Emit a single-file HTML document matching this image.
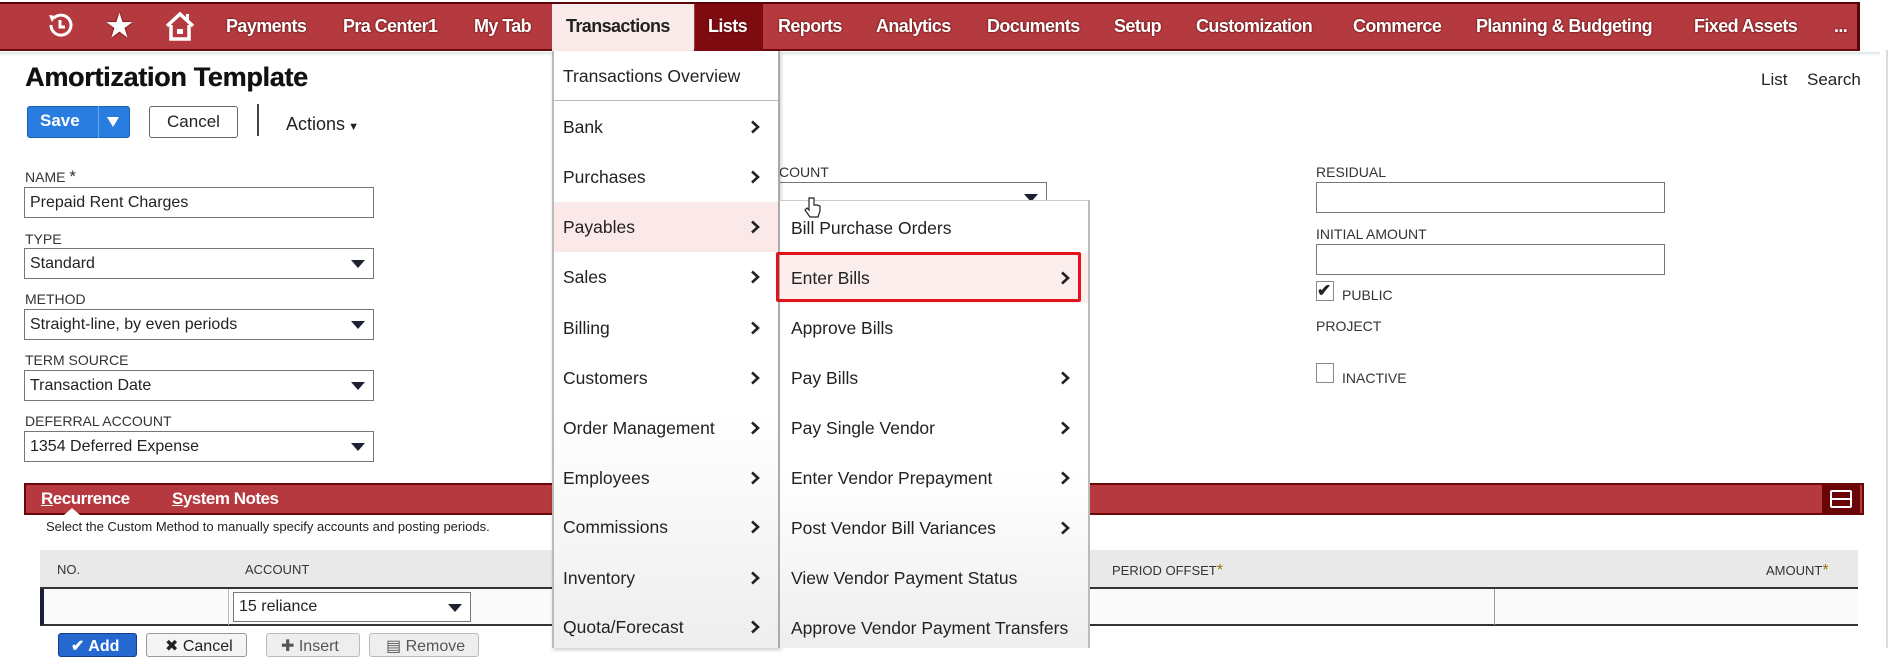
<!DOCTYPE html>
<html><head><meta charset="utf-8">
<style>
*{box-sizing:border-box;margin:0;padding:0}
body{width:1903px;height:648px;overflow:hidden;background:#fff;font-family:"Liberation Sans",sans-serif;color:#222;position:relative}
.a{position:absolute}
.nav{left:0;top:2px;width:1860px;height:49px;background:#b53a3f;border-top:2px solid #5a0508;border-bottom:2px solid #6a0a0d;border-right:3px solid #5a0508}
.ni{position:absolute;top:0;height:45px;line-height:45px;color:#fff;font-weight:bold;font-size:18px;letter-spacing:-0.6px;text-shadow:0 0 2px #400}
.lbl{font-size:14px;color:#333;position:absolute}
.box{position:absolute;border:1px solid #777;background:#fff;height:31px;font-size:16px;line-height:29px;padding-left:5px;color:#222}
.arr{position:absolute;right:8px;top:11px;width:0;height:0;border-left:7px solid transparent;border-right:7px solid transparent;border-top:8px solid #1d2233}
.mi{position:absolute;left:0;width:100%;height:50px;line-height:50px;font-size:17.5px;color:#222}
.ch{position:absolute;top:18px;width:10px;height:14px}
</style></head><body>
<svg width="0" height="0" style="position:absolute"><defs><symbol id="c" viewBox="0 0 10 14"><path d="M2 1.5 L8 7 L2 12.5" fill="none" stroke="#222" stroke-width="2.6"/></symbol></defs></svg>
<div class="a nav">
 <svg class="a" style="left:46px;top:8px" width="28" height="28" viewBox="0 0 28 28"><path d="M8 6 A10 10 0 1 1 5 13" fill="none" stroke="#fff" stroke-width="3"/><path d="M3 3 L10 4 L6 10Z" fill="#fff"/><path d="M14 8 V15 H19" fill="none" stroke="#fff" stroke-width="3"/></svg>
 <div class="ni" style="left:106px;font-size:30px">★</div>
 <svg class="a" style="left:164px;top:7px" width="32" height="30" viewBox="0 0 32 30"><path d="M3 15 L16 3 L29 15" fill="none" stroke="#fff" stroke-width="3.5"/><path d="M7 14 V28 H25 V14" fill="none" stroke="#fff" stroke-width="3.5"/><rect x="13" y="18" width="6" height="5" fill="#fff"/><rect x="22" y="3" width="3" height="7" fill="#fff"/></svg>
 <div class="ni" style="left:226px">Payments</div>
 <div class="ni" style="left:343px">Pra Center1</div>
 <div class="ni" style="left:474px">My Tab</div>
 <div class="a" style="left:552px;top:0;width:142px;height:47px;background:#fbeaea"></div>
 <div class="ni" style="left:566px;color:#222;text-shadow:none">Transactions</div>
 <div class="a" style="left:695px;top:0;width:68px;height:47px;background:#7e0b10"></div>
 <div class="ni" style="left:708px">Lists</div>
 <div class="ni" style="left:778px">Reports</div>
 <div class="ni" style="left:876px">Analytics</div>
 <div class="ni" style="left:987px">Documents</div>
 <div class="ni" style="left:1114px">Setup</div>
 <div class="ni" style="left:1196px">Customization</div>
 <div class="ni" style="left:1353px">Commerce</div>
 <div class="ni" style="left:1476px">Planning &amp; Budgeting</div>
 <div class="ni" style="left:1694px">Fixed Assets</div>
 <div class="ni" style="left:1834px">...</div>
</div>
<div class="a" style="left:1886px;top:50px;width:2px;height:598px;background:#ddd"></div>
<div class="a" style="left:0;top:52px;width:1880px;height:4px;background:linear-gradient(#d8e6e6,#fff)"></div>

<div class="a" style="left:25px;top:62px;font-size:27px;font-weight:bold;color:#111;letter-spacing:-0.3px;text-shadow:0.4px 0 0 #111">Amortization Template</div>
<div class="a" style="left:27px;top:106px;width:103px;height:32px;background:#2a7de0;border:1px solid #1a5fb0;border-radius:3px"></div>
<div class="a" style="left:40px;top:111px;color:#fff;font-weight:bold;font-size:17px">Save</div>
<div class="a" style="left:98px;top:106px;width:1px;height:32px;background:#6aa6ee"></div>
<div class="a" style="left:107px;top:117px;border-left:6px solid transparent;border-right:6px solid transparent;border-top:10px solid #fff;width:0;height:0"></div>
<div class="a" style="left:149px;top:106px;width:89px;height:32px;border:1px solid #666;border-radius:3px;text-align:center;line-height:30px;font-size:17px">Cancel</div>
<div class="a" style="left:257px;top:104px;width:2px;height:32px;background:#444"></div>
<div class="a" style="left:286px;top:114px;font-size:18px">Actions<span style="font-size:11px"> ▼</span></div>
<div class="a" style="left:1761px;top:70px;font-size:17px">List</div>
<div class="a" style="left:1807px;top:70px;font-size:17px">Search</div>

<div class="lbl" style="left:25px;top:167px">NAME <span style="font-size:17px">*</span></div>
<div class="box" style="left:24px;top:187px;width:350px">Prepaid Rent Charges</div>
<div class="lbl" style="left:25px;top:231px">TYPE</div>
<div class="box" style="left:24px;top:248px;width:350px">Standard<i class="arr"></i></div>
<div class="lbl" style="left:25px;top:291px">METHOD</div>
<div class="box" style="left:24px;top:309px;width:350px">Straight-line, by even periods<i class="arr"></i></div>
<div class="lbl" style="left:25px;top:352px">TERM SOURCE</div>
<div class="box" style="left:24px;top:370px;width:350px">Transaction Date<i class="arr"></i></div>
<div class="lbl" style="left:25px;top:413px">DEFERRAL ACCOUNT</div>
<div class="box" style="left:24px;top:431px;width:350px">1354 Deferred Expense<i class="arr"></i></div>

<div class="lbl" style="left:779px;top:164px">COUNT</div>
<div class="box" style="left:779px;top:182px;width:268px"><i class="arr"></i></div>

<div class="lbl" style="left:1316px;top:164px">RESIDUAL</div>
<div class="box" style="left:1316px;top:182px;width:349px"></div>
<div class="lbl" style="left:1316px;top:226px">INITIAL AMOUNT</div>
<div class="box" style="left:1316px;top:244px;width:349px"></div>
<div class="a" style="left:1316px;top:281px;width:18px;height:20px;border:1px solid #888;font-size:17px;line-height:17px;font-weight:bold">✔</div>
<div class="lbl" style="left:1342px;top:287px">PUBLIC</div>
<div class="lbl" style="left:1316px;top:318px">PROJECT</div>
<div class="a" style="left:1316px;top:363px;width:18px;height:20px;border:1px solid #888"></div>
<div class="lbl" style="left:1342px;top:370px">INACTIVE</div>

<div class="a" style="left:24px;top:483px;width:1840px;height:32px;background:#b5393e;border:2px solid #6a0508"></div>
<div class="a" style="left:41px;top:489px;color:#fff;font-weight:bold;font-size:17px;letter-spacing:-0.5px"><u>R</u>ecurrence</div>
<div class="a" style="left:172px;top:489px;color:#fff;font-weight:bold;font-size:17px;letter-spacing:-0.5px"><u>S</u>ystem Notes</div>
<div class="a" style="left:64px;top:508px;border-left:8px solid transparent;border-right:8px solid transparent;border-bottom:7px solid #fff;width:0;height:0"></div>
<div class="a" style="left:1822px;top:485px;width:38px;height:28px;background:#6a0508"></div>
<div class="a" style="left:1830px;top:490px;width:22px;height:18px;border:2px solid #fff;border-radius:2px"></div>
<div class="a" style="left:1830px;top:498px;width:22px;height:2px;background:#fff"></div>
<div class="a" style="left:46px;top:519px;font-size:13px;color:#222">Select the Custom Method to manually specify accounts and posting periods.</div>

<div class="a" style="left:40px;top:550px;width:1818px;height:39px;background:#e9e9e9;border-bottom:2px solid #333"></div>
<div class="lbl" style="left:57px;top:562px;font-size:13px">NO.</div>
<div class="lbl" style="left:245px;top:562px;font-size:13px">ACCOUNT</div>
<div class="lbl" style="left:1112px;top:562px;font-size:13px">PERIOD OFFSET<span style="color:#a07000;font-size:16px">*</span></div>
<div class="lbl" style="left:1766px;top:562px;font-size:13px">AMOUNT<span style="color:#a07000;font-size:16px">*</span></div>
<div class="a" style="left:40px;top:589px;width:1818px;height:37px;border-left:4px solid #1c2036;border-bottom:2px solid #333;background:#fafafa"></div>
<div class="a" style="left:228px;top:589px;width:1px;height:36px;background:#bbb"></div>
<div class="a" style="left:1494px;top:589px;width:1px;height:36px;background:#999"></div>
<div class="box" style="left:233px;top:592px;width:238px;height:30px;line-height:28px">15 reliance<i class="arr"></i></div>
<div class="a" style="left:58px;top:633px;width:79px;height:24px;background:#2569d0;border:1px solid #143e8a;border-radius:3px;color:#fff;font-weight:bold;font-size:16px;padding:2px 0 0 12px">✔ Add</div>
<div class="a" style="left:146px;top:633px;width:101px;height:24px;border:1px solid #999;border-radius:3px;background:#f4f4f4;font-size:16px;padding:2px 0 0 18px">✖ Cancel</div>
<div class="a" style="left:266px;top:633px;width:94px;height:24px;border:1px solid #bbb;border-radius:3px;background:#eee;font-size:16px;padding:2px 0 0 14px;color:#555">✚ Insert</div>
<div class="a" style="left:369px;top:633px;width:110px;height:24px;border:1px solid #bbb;border-radius:3px;background:#eee;font-size:16px;padding:2px 0 0 16px;color:#555">▤ Remove</div>

<!-- menu 1 -->
<div class="a" style="left:552px;top:51px;width:228px;height:597px;background:linear-gradient(#fff 60%,#eee);border-left:2px solid #bbb;border-right:2px solid #aaa;box-shadow:1px 2px 4px rgba(0,0,0,.2)">
 <div class="mi" style="top:0;padding-left:9px;border-bottom:1px solid #bbb">Transactions Overview</div>
 <div class="mi" style="top:51px;padding-left:9px">Bank<svg class="ch" style="left:196px"><use href="#c"/></svg></div>
 <div class="mi" style="top:101px;padding-left:9px">Purchases<svg class="ch" style="left:196px"><use href="#c"/></svg></div>
 <div class="mi" style="top:151px;padding-left:9px;background:#fbe9e9">Payables<svg class="ch" style="left:196px"><use href="#c"/></svg></div>
 <div class="mi" style="top:201px;padding-left:9px">Sales<svg class="ch" style="left:196px"><use href="#c"/></svg></div>
 <div class="mi" style="top:252px;padding-left:9px">Billing<svg class="ch" style="left:196px"><use href="#c"/></svg></div>
 <div class="mi" style="top:302px;padding-left:9px">Customers<svg class="ch" style="left:196px"><use href="#c"/></svg></div>
 <div class="mi" style="top:352px;padding-left:9px">Order Management<svg class="ch" style="left:196px"><use href="#c"/></svg></div>
 <div class="mi" style="top:402px;padding-left:9px">Employees<svg class="ch" style="left:196px"><use href="#c"/></svg></div>
 <div class="mi" style="top:451px;padding-left:9px">Commissions<svg class="ch" style="left:196px"><use href="#c"/></svg></div>
 <div class="mi" style="top:502px;padding-left:9px">Inventory<svg class="ch" style="left:196px"><use href="#c"/></svg></div>
 <div class="mi" style="top:551px;padding-left:9px">Quota/Forecast<svg class="ch" style="left:196px"><use href="#c"/></svg></div>
</div>
<!-- menu 2 -->
<div class="a" style="left:778px;top:200px;width:312px;height:448px;background:linear-gradient(#fff 60%,#eee);border-left:2px solid #aaa;border-right:2px solid #bbb;border-top:1px solid #ccc">
 <div class="mi" style="top:2px;padding-left:11px">Bill Purchase Orders</div>
 <div class="mi" style="top:52px;padding-left:11px;background:#fbeeed">Enter Bills<svg class="ch" style="left:280px"><use href="#c"/></svg></div>
 <div class="mi" style="top:102px;padding-left:11px">Approve Bills</div>
 <div class="mi" style="top:152px;padding-left:11px">Pay Bills<svg class="ch" style="left:280px"><use href="#c"/></svg></div>
 <div class="mi" style="top:202px;padding-left:11px">Pay Single Vendor<svg class="ch" style="left:280px"><use href="#c"/></svg></div>
 <div class="mi" style="top:252px;padding-left:11px">Enter Vendor Prepayment<svg class="ch" style="left:280px"><use href="#c"/></svg></div>
 <div class="mi" style="top:302px;padding-left:11px">Post Vendor Bill Variances<svg class="ch" style="left:280px"><use href="#c"/></svg></div>
 <div class="mi" style="top:352px;padding-left:11px">View Vendor Payment Status</div>
 <div class="mi" style="top:402px;padding-left:11px">Approve Vendor Payment Transfers</div>
</div>
<div class="a" style="left:776px;top:252px;width:305px;height:50px;border:3px solid #e3131b;border-radius:2px"></div>
<svg class="a" style="left:804px;top:196px" width="18" height="24" viewBox="0 0 18 24"><path d="M5 2 V14 L3 12 L1 14 L6 21 H14 L16 15 V10 L13 9 L10 9 V2 Z" fill="#fff" stroke="#222" stroke-width="1.2"/></svg>
</body></html>
